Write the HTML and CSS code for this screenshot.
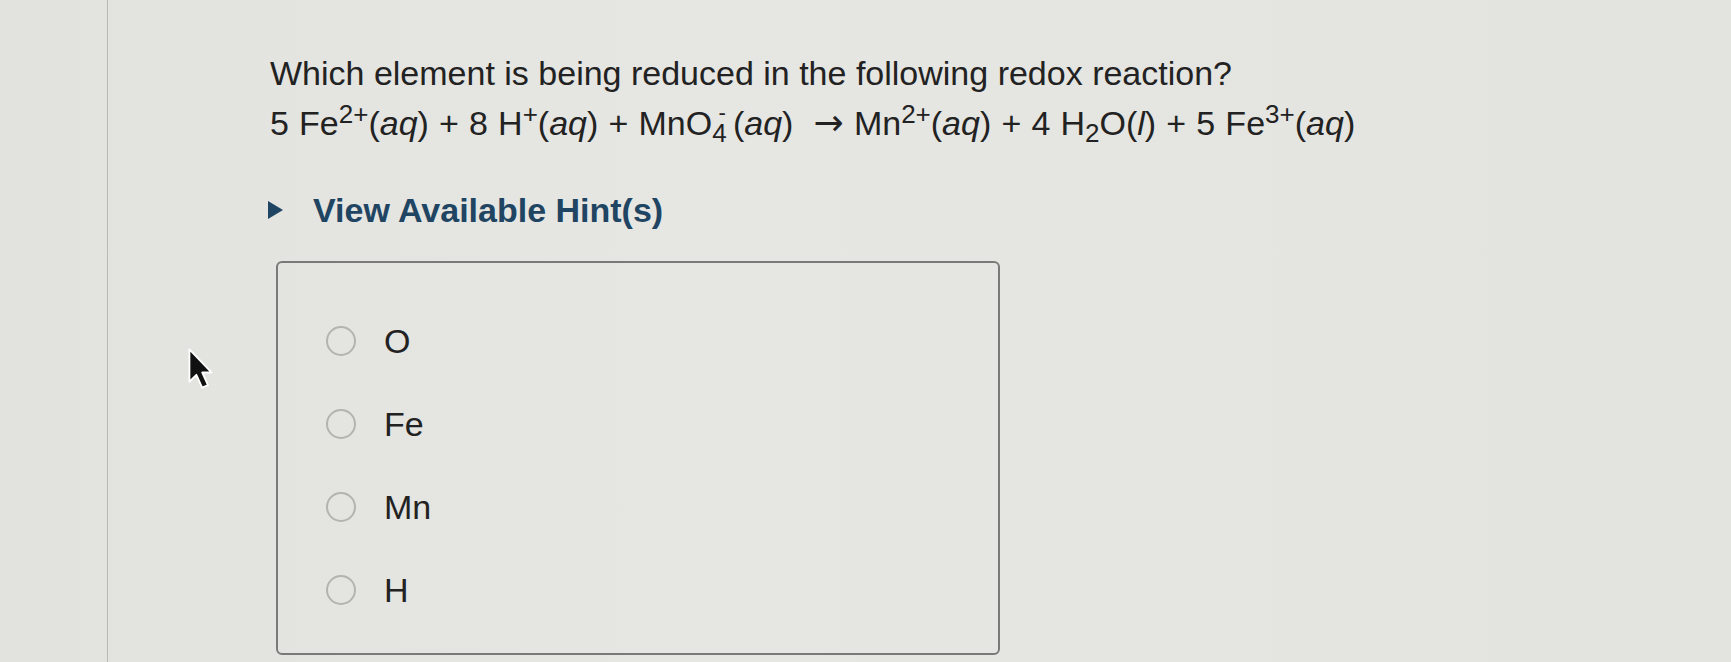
FILE: index.html
```html
<!DOCTYPE html>
<html>
<head>
<meta charset="utf-8">
<link rel="stylesheet" href="styles.css">
</head>
<body>
<div class="page">
  <div class="content">
    <p class="question">Which element is being reduced in the following redox reaction?</p>
    <p class="equation">5 Fe<sup>2+</sup>(<i>aq</i>) + 8 H<sup>+</sup>(<i>aq</i>) + MnO<sub>4</sub><sup class="neg">-</sup>(<i>aq</i>) <span class="arrow">→</span> Mn<sup>2+</sup>(<i>aq</i>) + 4 H<sub>2</sub>O(<i>l</i>) + 5 Fe<sup>3+</sup>(<i>aq</i>)</p>
    <div class="hint"><span class="tri"></span><span class="hint-text">View Available Hint(s)</span></div>
    <div class="choices">
      <label class="choice"><span class="radio"></span><span class="opt">O</span></label>
      <label class="choice"><span class="radio"></span><span class="opt">Fe</span></label>
      <label class="choice"><span class="radio"></span><span class="opt">Mn</span></label>
      <label class="choice"><span class="radio"></span><span class="opt">H</span></label>
    </div>
  </div>
</div>
<svg class="cursor" width="28" height="44" viewBox="0 0 24 38"><path d="M2 2 L2 30 L8 24 L13 35 L18 33 L13 22 L21 22 Z" fill="#111" stroke="#fff" stroke-width="1.6" stroke-linejoin="round"/></svg>
</body>
</html>
```
FILE: styles.css
```css
html, body {
  margin: 0;
  padding: 0;
}
body {
  background: linear-gradient(90deg, #e2e2de 0%, #e6e6e2 40%, #e3e3df 100%);
  font-family: "Liberation Sans", Arial, Helvetica, sans-serif;
  color: #222;
  width: 1731px;
  height: 662px;
  overflow: hidden;
  position: relative;
}
.page {
  margin-left: 107px;
  border-left: 1px solid #b9b9b5;
  height: 662px;
  padding-left: 162px;
  padding-top: 53px;
  box-sizing: border-box;
}
.question {
  margin: 0;
  font-size: 34px;
  line-height: 40px;
}
.equation {
  margin: 8px 0 0 0;
  font-size: 34px;
  line-height: 44px;
  word-spacing: 0.7px;
}
.equation sup, .equation sub {
  font-size: 26px;
  line-height: 0;
}
.equation sup { vertical-align: 12px; }
.equation sub { vertical-align: -7px; }
.equation sup.neg {
  font-size: 22px;
  margin-left: -8px;
  margin-right: 7px;
  vertical-align: 15px;
}
.arrow {
  font-family: "DejaVu Sans", sans-serif;
  font-size: 36px;
  line-height: 0;
  vertical-align: 0;
  margin: 0 0 0 10px;
}
.hint {
  display: flex;
  align-items: center;
  margin-top: 45px;
  margin-left: -2px;
  gap: 30px;
}
.tri {
  width: 0;
  height: 0;
  border-top: 9px solid transparent;
  border-bottom: 9px solid transparent;
  border-left: 15px solid #1f4563;
}
.hint-text {
  font-weight: bold;
  font-size: 34px;
  color: #1f4563;
  line-height: 40px;
}
.choices {
  margin-top: 31px;
  margin-left: 6px;
  width: 724px;
  height: 394px;
  border: 2px solid #7a7a78;
  border-radius: 6px;
  box-sizing: border-box;
  padding-top: 58px;
  padding-left: 48px;
  display: flex;
  flex-direction: column;
  gap: 43px;
}
.choice {
  display: flex;
  align-items: center;
  gap: 28px;
  height: 40px;
}
.radio {
  width: 30px;
  height: 30px;
  border: 2px solid #b3b3b0;
  border-radius: 50%;
  box-sizing: border-box;
}
.opt {
  font-size: 34px;
  line-height: 40px;
}
.cursor {
  position: absolute;
  left: 187px;
  top: 347px;
}
```
